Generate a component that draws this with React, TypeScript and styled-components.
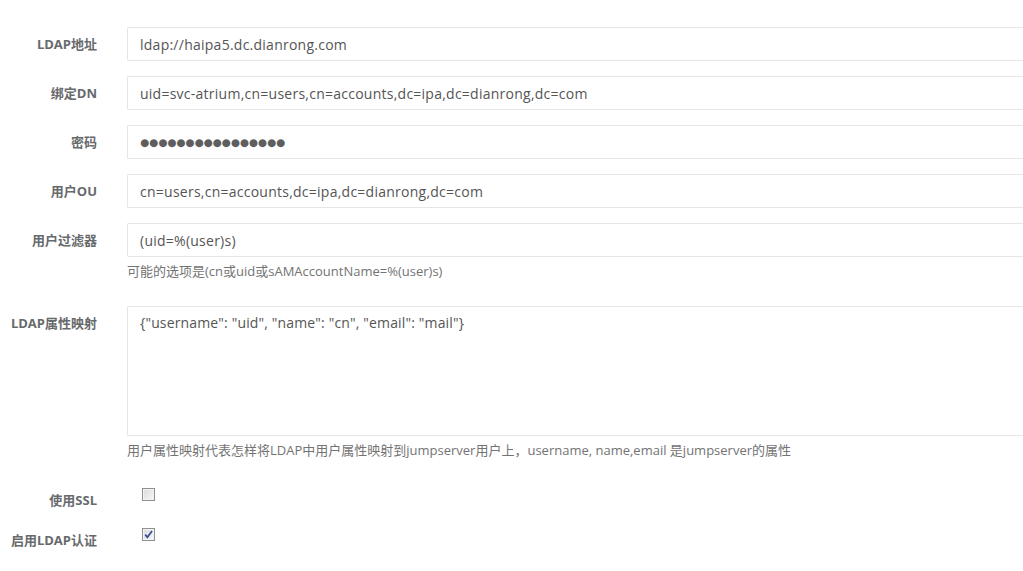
import React from "react"
import styled, { createGlobalStyle } from "styled-components"

const GlobalStyle = createGlobalStyle`
  html, body {
    margin: 0;
    padding: 0;
    background: #ffffff;
    overflow: hidden;
  }
  body {
    font-family: "Open Sans", "Noto Sans CJK SC", "Helvetica Neue", Arial, sans-serif;
    font-size: 13px;
    color: #676a6c;
  }
`

const Form = styled.form`
  width: 1120px;
  padding-top: 27px;
`

const Group = styled.div<{ $compact?: boolean }>`
  display: grid;
  grid-template-columns: 97px 1fr;
  column-gap: 30px;
  margin-bottom: 15px;
  min-height: ${(p) => (p.$compact ? "25px" : "34px")};
`

const Label = styled.label<{ $compact?: boolean }>`
  text-align: right;
  font-weight: 700;
  font-size: 13px;
  line-height: ${(p) => (p.$compact ? "18px" : "20px")};
  padding-top: 7px;
  color: #676a6c;
  white-space: nowrap;
`

const Field = styled.div`
  display: flex;
  flex-direction: column;
`

const Input = styled.input<{ $dots?: boolean }>`
  box-sizing: border-box;
  height: 34px;
  width: 100%;
  padding: 6px 12px;
  border: 1px solid #e5e6e7;
  border-radius: 1px;
  font-family: ${(p) =>
    p.$dots ? '"DejaVu Sans", sans-serif' : '"Open Sans", "Noto Sans CJK SC", sans-serif'};
  font-size: ${(p) => (p.$dots ? "10.4px" : "14px")};
  letter-spacing: ${(p) => (p.$dots ? "0" : "0.25px")};
  line-height: 20px;
  color: ${(p) => (p.$dots ? "#5e5e5e" : "#555555")};
  background: #ffffff;
  outline: none;
`

const TextArea = styled.textarea`
  box-sizing: border-box;
  height: 130px;
  width: 100%;
  padding: 6px 12px;
  border: 1px solid #e5e6e7;
  border-radius: 1px;
  font-family: "Open Sans", "Noto Sans CJK SC", sans-serif;
  font-size: 14px;
  letter-spacing: 0.15px;
  line-height: 20px;
  color: #555555;
  resize: none;
  outline: none;
`

const Help = styled.span`
  display: block;
  margin-top: 5px;
  margin-bottom: 10px;
  font-size: 13px;
  line-height: 18.6px;
  color: #737373;
  white-space: nowrap;
`

const CheckWrap = styled.div`
  padding-top: 4px;
  padding-left: 15px;
`

const CheckBox = styled.span`
  display: flex;
  align-items: center;
  justify-content: center;
  box-sizing: border-box;
  width: 13px;
  height: 13px;
  border: 1px solid #8e8f8f;
  background: linear-gradient(135deg, #dcdcdc 0%, #f6f6f6 100%);
  box-shadow: inset 0 0 0 1px #f4f4f4;
`

const Check = () => (
  <svg width="9" height="9" viewBox="0 0 9 9">
    <path d="M1.2 4.6 L3.4 7.2 L8 1" fill="none" stroke="#3d4f9a" strokeWidth="1.8" />
  </svg>
)

const Checkbox: React.FC<{ checked?: boolean }> = ({ checked }) => (
  <CheckWrap>
    <CheckBox>{checked && <Check />}</CheckBox>
  </CheckWrap>
)

const App: React.FC = () => {
  return (
    <>
      <GlobalStyle />
      <Form>
        <Group>
          <Label>LDAP地址</Label>
          <Field>
            <Input readOnly value="ldap://haipa5.dc.dianrong.com" />
          </Field>
        </Group>
        <Group>
          <Label>绑定DN</Label>
          <Field>
            <Input readOnly value="uid=svc-atrium,cn=users,cn=accounts,dc=ipa,dc=dianrong,dc=com" />
          </Field>
        </Group>
        <Group>
          <Label>密码</Label>
          <Field>
            <Input $dots readOnly value={"\u25CF".repeat(16)} />
          </Field>
        </Group>
        <Group>
          <Label>用户OU</Label>
          <Field>
            <Input readOnly value="cn=users,cn=accounts,dc=ipa,dc=dianrong,dc=com" />
          </Field>
        </Group>
        <Group>
          <Label>用户过滤器</Label>
          <Field>
            <Input readOnly value="(uid=%(user)s)" />
            <Help>可能的选项是(cn或uid或sAMAccountName=%(user)s)</Help>
          </Field>
        </Group>
        <Group>
          <Label>LDAP属性映射</Label>
          <Field>
            <TextArea readOnly value={'{"username": "uid", "name": "cn", "email": "mail"}'} />
            <Help>用户属性映射代表怎样将LDAP中用户属性映射到jumpserver用户上，username, name,email 是jumpserver的属性</Help>
          </Field>
        </Group>
        <Group $compact>
          <Label $compact>使用SSL</Label>
          <Checkbox />
        </Group>
        <Group $compact>
          <Label $compact>启用LDAP认证</Label>
          <Checkbox checked />
        </Group>
      </Form>
    </>
  )
}

export default App
